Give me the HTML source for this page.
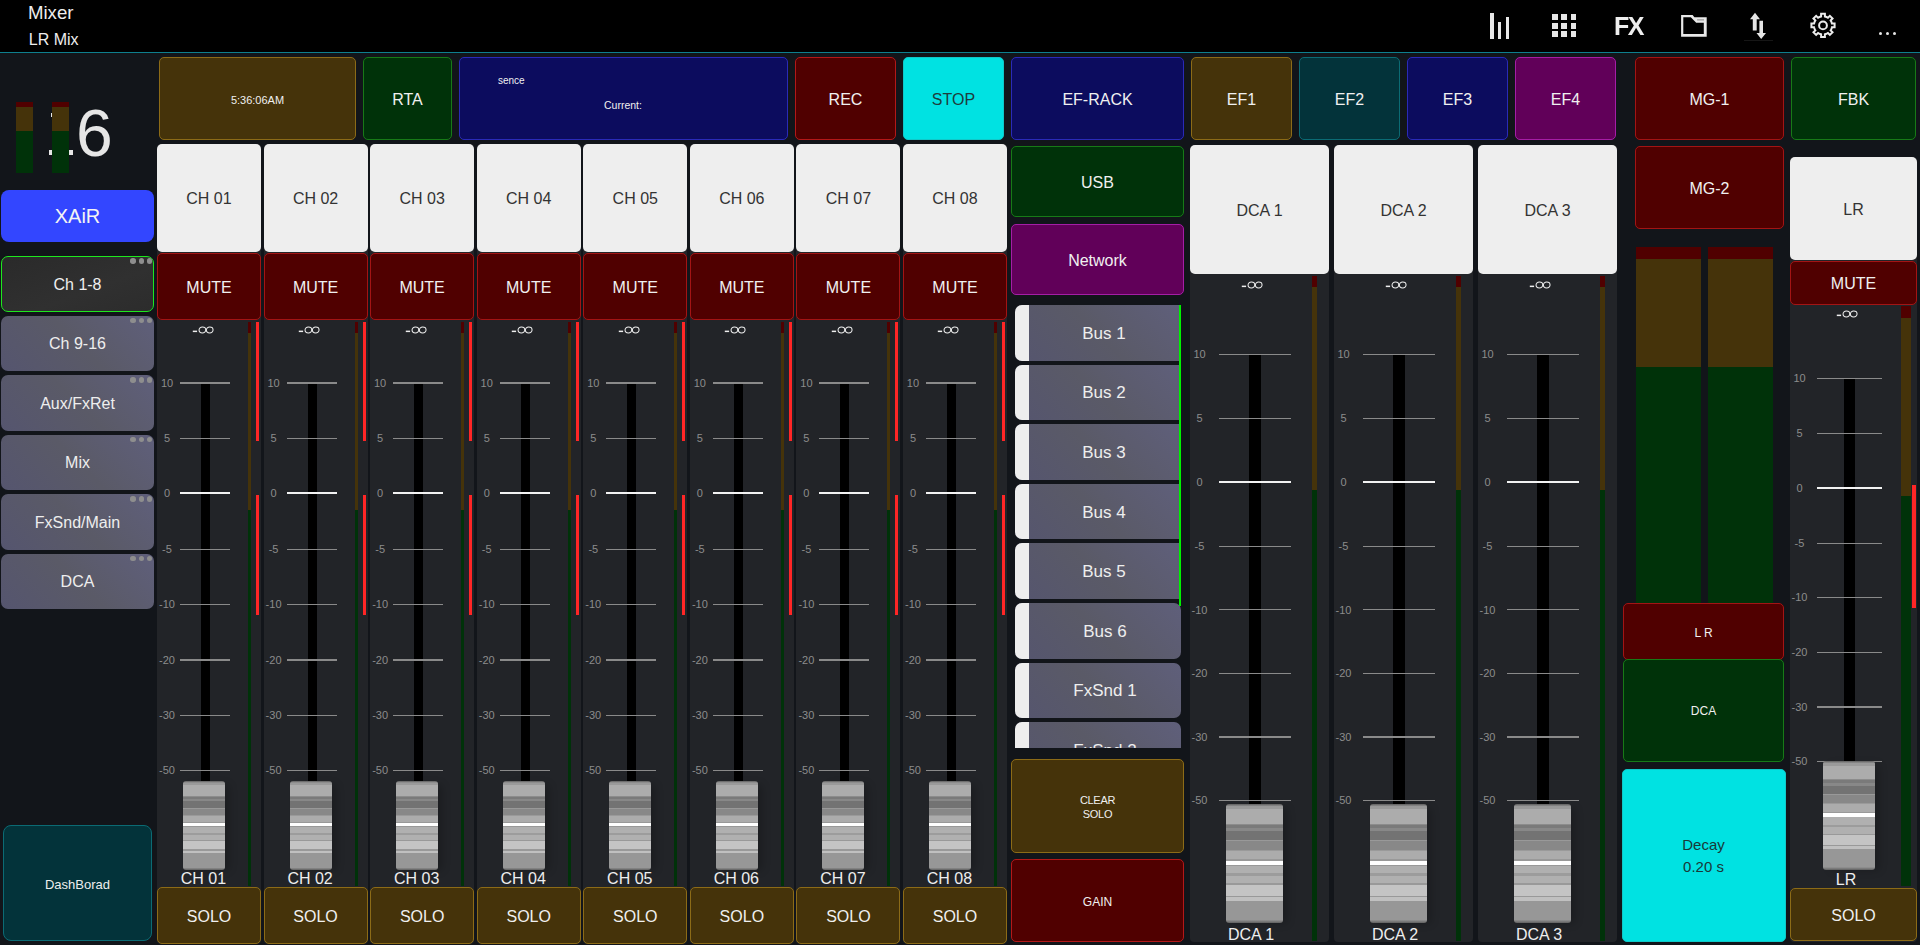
<!DOCTYPE html><html><head><meta charset="utf-8"><title>Mixer</title><style>
*{margin:0;padding:0;box-sizing:border-box}
html,body{width:1920px;height:945px;overflow:hidden;background:#12151a;font-family:"Liberation Sans",sans-serif}
div{position:absolute}
.c{display:flex;align-items:center;justify-content:center;text-align:center;padding-top:2px}
.btn{border-radius:5px;border:1px solid;color:#f0f0f0;font-size:16px}
.wb{background:#eeeeee;border-radius:5px;color:#333;font-size:16px}
.strip{background:#222428;border-radius:4px}
.lbl{color:#8c8c8c;font-size:11px;text-align:center;width:30px;line-height:11px}
.ln{background:#8a8a8a;height:1px}
.inf{color:#eee;font-size:16px;text-align:center;line-height:10px}
.knob{border-radius:3px;box-shadow:6px 2px 8px -2px rgba(0,0,0,0.22);background:linear-gradient(to bottom,#5e5e5e 0%,#9a9a9a 2.15%,#9a9a9a 2.15%,#9a9a9a 4.5%,#acacac 4.5%,#acacac 16.5%,#8c8c8c 16.5%,#8c8c8c 17.7%,#7a7a7a 17.7%,#7a7a7a 20.1%,#888888 20.1%,#888888 22.5%,#737373 22.5%,#737373 30.3%,#999999 30.3%,#999999 31.5%,#888888 31.5%,#888888 38.6%,#9a9a9a 38.6%,#9a9a9a 39.8%,#acacac 39.8%,#acacac 46.4%,#999999 46.4%,#999999 47.6%,#ffffff 47.6%,#ffffff 51%,#999999 51%,#999999 51.8%,#b0b0b0 51.8%,#b0b0b0 58.4%,#9c9c9c 58.4%,#9c9c9c 60.2%,#b0b0b0 60.2%,#b0b0b0 66.7%,#999999 66.7%,#999999 67.9%,#c4c4c4 67.9%,#c4c4c4 76.9%,#999999 76.9%,#999999 78.1%,#c0c0c0 78.1%,#c0c0c0 81.1%,#979797 81.1%,#979797 97.2%,#979797 97.2%,#606060 100%)}
.nm{color:#eee;font-size:16px;text-align:center;line-height:14px}
.tab{border-radius:7px;background:linear-gradient(45deg,#55556f 0%,#5a5a67 50%,#5f5f7b 100%);color:#eee;font-size:16px}
.dots{width:22px;height:6px}
.dots i{position:absolute;top:0;width:5.5px;height:5.5px;border-radius:50%;background:#8e8e8e}
.bus{background:linear-gradient(45deg,#55556f 0%,#5a5a67 50%,#5f5f7b 100%);color:#eee;font-size:17px;border-radius:7px}
</style></head><body>
<div class="" style="left:0px;top:0px;width:1920px;height:52px;background:#000"></div>
<div class="" style="left:0px;top:52px;width:1920px;height:1px;background:#0e7f8e"></div>
<div style="left:28px;top:1.5px;color:#eee;font-size:18.6px;line-height:22px">Mixer</div>
<div style="left:28.8px;top:29.5px;color:#eee;font-size:16px;line-height:20px">LR Mix</div>
<div class="" style="left:1490px;top:13px;width:3.5px;height:26px;background:#e8e8e8"></div>
<div class="" style="left:1497.5px;top:22px;width:3.4px;height:17px;background:#e8e8e8"></div>
<div class="" style="left:1505.9px;top:17px;width:3.3px;height:22px;background:#e8e8e8"></div>
<div class="" style="left:1552px;top:14px;width:6px;height:6px;background:#e6e6e6"></div>
<div class="" style="left:1561px;top:14px;width:6px;height:6px;background:#e6e6e6"></div>
<div class="" style="left:1570.7px;top:14px;width:5.5px;height:6px;background:#e6e6e6"></div>
<div class="" style="left:1552px;top:22.8px;width:6px;height:6px;background:#e6e6e6"></div>
<div class="" style="left:1561px;top:22.8px;width:6px;height:6px;background:#e6e6e6"></div>
<div class="" style="left:1570.7px;top:22.8px;width:5.5px;height:6px;background:#e6e6e6"></div>
<div class="" style="left:1552px;top:31px;width:6px;height:6px;background:#e6e6e6"></div>
<div class="" style="left:1561px;top:31px;width:6px;height:6px;background:#e6e6e6"></div>
<div class="" style="left:1570.7px;top:31px;width:5.5px;height:6px;background:#e6e6e6"></div>
<div style="left:1614px;top:11px;color:#eee;font-size:25px;font-weight:bold;line-height:30px;letter-spacing:-1.5px;transform:translateZ(0)">FX</div>
<svg style="position:absolute;left:1670px;top:5px" width="50" height="40" viewBox="1670 5 50 40">
<path fill-rule="evenodd" d="M1681.1 15 H1692.6 L1694.4 17.2 H1706.7 V36.8 H1681.1 Z M1683.3 17.3 H1690.8 L1696.2 22.7 H1703.8 V34 H1683.3 Z" fill="#e8e8e8"/>
<rect x="1697.1" y="19.1" width="6.9" height="1.5" fill="#a8a8a8"/>
</svg>
<div class="" style="left:1744px;top:40px;width:29px;height:1px;background:#161616"></div>
<svg style="position:absolute;left:1740px;top:5px" width="40" height="40" viewBox="1740 5 40 40">
<path d="M1755 12.7 L1760 19.3 H1756.7 V30.4 H1752.8 V19.3 H1750 Z" fill="#e6e6e6"/>
<path d="M1761.2 39 L1766 33 H1763 V20.8 H1759.4 V33 H1756.5 Z" fill="#e6e6e6"/>
</svg>
<svg style="position:absolute;left:1800px;top:0px" width="50" height="50" viewBox="1800 0 50 50">
<path d="M1821.10 16.50 L1821.10 13.80 L1824.90 13.80 L1824.90 16.50 L1825.70 16.71 L1826.48 16.99 L1827.23 17.34 L1827.95 17.76 L1829.86 15.85 L1832.55 18.54 L1830.64 20.45 L1831.06 21.17 L1831.41 21.92 L1831.69 22.70 L1831.90 23.50 L1834.60 23.50 L1834.60 27.30 L1831.90 27.30 L1831.69 28.10 L1831.41 28.88 L1831.06 29.63 L1830.64 30.35 L1832.55 32.26 L1829.86 34.95 L1827.95 33.04 L1827.23 33.46 L1826.48 33.81 L1825.70 34.09 L1824.90 34.30 L1824.90 37.00 L1821.10 37.00 L1821.10 34.30 L1820.30 34.09 L1819.52 33.81 L1818.77 33.46 L1818.05 33.04 L1816.14 34.95 L1813.45 32.26 L1815.36 30.35 L1814.94 29.63 L1814.59 28.88 L1814.31 28.10 L1814.10 27.30 L1811.40 27.30 L1811.40 23.50 L1814.10 23.50 L1814.31 22.70 L1814.59 21.92 L1814.94 21.17 L1815.36 20.45 L1813.45 18.54 L1816.14 15.85 L1818.05 17.76 L1818.77 17.34 L1819.52 16.99 L1820.30 16.71 Z" fill="none" stroke="#ececec" stroke-width="2" stroke-linejoin="miter"/>
<circle cx="1823" cy="25.4" r="3.9" fill="none" stroke="#ececec" stroke-width="2"/>
</svg>
<div class="" style="left:1878.9px;top:31.9px;width:3.2px;height:3.2px;background:#e6e6e6;border-radius:50%"></div>
<div class="" style="left:1885.9px;top:31.9px;width:3.2px;height:3.2px;background:#e6e6e6;border-radius:50%"></div>
<div class="" style="left:1892.9px;top:31.9px;width:3.2px;height:3.2px;background:#e6e6e6;border-radius:50%"></div>
<div style="left:76px;top:93px;color:#e6e6e6;font-size:66px;line-height:80px">6</div>
<div class="" style="left:49px;top:150px;width:24px;height:5px;background:#e6e6e6"></div>
<div class="" style="left:50.5px;top:112.5px;width:3px;height:4.5px;background:#e6e6e6"></div>
<div class="" style="left:16px;top:102px;width:17px;height:5px;background:#500000"></div>
<div class="" style="left:16px;top:107px;width:17px;height:24px;background:#45330a"></div>
<div class="" style="left:16px;top:131px;width:17px;height:42px;background:#003209"></div>
<div class="" style="left:52px;top:102px;width:17px;height:5px;background:#500000"></div>
<div class="" style="left:52px;top:107px;width:17px;height:24px;background:#45330a"></div>
<div class="" style="left:52px;top:131px;width:17px;height:42px;background:#003209"></div>
<div class="c" style="left:1px;top:189.5px;width:153px;height:52px;background:#3346ff;border-radius:8px;color:#f4f4f4;font-size:20px">XAiR</div>
<div class="c" style="left:1px;top:256px;width:153px;height:55.5px;background:linear-gradient(160deg,#2a2a2a,#303030 60%,#2c2c2c);border:1.5px solid #1ee81e;border-radius:7px;color:#f0f0f0;font-size:16px">Ch 1-8</div>
<div class="dots" style="left:130.4px;top:258px"><i style="left:0"></i><i style="left:8.4px"></i><i style="left:16.6px"></i></div>
<div class="c tab" style="left:1px;top:315.5px;width:153px;height:55.5px;">Ch 9-16</div>
<div class="dots" style="left:130.4px;top:317.5px"><i style="left:0"></i><i style="left:8.4px"></i><i style="left:16.6px"></i></div>
<div class="c tab" style="left:1px;top:375px;width:153px;height:55.5px;">Aux/FxRet</div>
<div class="dots" style="left:130.4px;top:377px"><i style="left:0"></i><i style="left:8.4px"></i><i style="left:16.6px"></i></div>
<div class="c tab" style="left:1px;top:434.5px;width:153px;height:55.5px;">Mix</div>
<div class="dots" style="left:130.4px;top:436.5px"><i style="left:0"></i><i style="left:8.4px"></i><i style="left:16.6px"></i></div>
<div class="c tab" style="left:1px;top:494px;width:153px;height:55.5px;">FxSnd/Main</div>
<div class="dots" style="left:130.4px;top:496px"><i style="left:0"></i><i style="left:8.4px"></i><i style="left:16.6px"></i></div>
<div class="c tab" style="left:1px;top:553.5px;width:153px;height:55.5px;">DCA</div>
<div class="dots" style="left:130.4px;top:555.5px"><i style="left:0"></i><i style="left:8.4px"></i><i style="left:16.6px"></i></div>
<div class="c" style="left:3px;top:825px;width:149px;height:116px;background:#03333a;border:1px solid #0b6b74;border-radius:8px;color:#eee;font-size:13px">DashBorad</div>
<div class="c btn" style="left:159px;top:57px;width:197px;height:83px;background:#45330a;border-color:#8c6b17;font-size:11px;color:#f0f0f0">5:36:06AM</div>
<div class="c btn" style="left:363px;top:57px;width:89px;height:83px;background:#003209;border-color:#177a17;font-size:16px;color:#f0f0f0">RTA</div>
<div class="btn" style="left:459px;top:57px;width:329px;height:83px;background:#0c0c5e;border-color:#2a2ab8"><div style="left:38px;top:17px;font-size:10px;line-height:12px">sence</div><div style="left:144px;top:40.5px;font-size:10.5px;line-height:12px">Current:</div></div>
<div class="c btn" style="left:795px;top:57px;width:101px;height:83px;background:#500000;border-color:#b31818;font-size:16px;color:#f0f0f0">REC</div>
<div class="c btn" style="left:903px;top:57px;width:101px;height:83px;background:#00e2e2;border-color:#10c8c8;font-size:16px;color:#1e3c3c">STOP</div>
<div class="c btn" style="left:1011px;top:57px;width:173px;height:83px;background:#0c0c5e;border-color:#2a2ab8;font-size:16px;color:#f0f0f0">EF-RACK</div>
<div class="c btn" style="left:1191px;top:57px;width:101px;height:83px;background:#45330a;border-color:#8c6b17;font-size:16px;color:#f0f0f0">EF1</div>
<div class="c btn" style="left:1299px;top:57px;width:101px;height:83px;background:#03333a;border-color:#0b6b74;font-size:16px;color:#f0f0f0">EF2</div>
<div class="c btn" style="left:1407px;top:57px;width:101px;height:83px;background:#0c0c5e;border-color:#2a2ab8;font-size:16px;color:#f0f0f0">EF3</div>
<div class="c btn" style="left:1515px;top:57px;width:101px;height:83px;background:#610059;border-color:#a51ea5;font-size:16px;color:#f0f0f0">EF4</div>
<div class="c btn" style="left:1635px;top:57px;width:149px;height:83px;background:#500000;border-color:#a31414;font-size:16px;color:#f0f0f0">MG-1</div>
<div class="c btn" style="left:1791px;top:57px;width:125px;height:83px;background:#003209;border-color:#177a17;font-size:16px;color:#f0f0f0">FBK</div>
<div class="c btn" style="left:1011px;top:146px;width:173px;height:71px;background:#003209;border-color:#177a17;font-size:16px;color:#f0f0f0">USB</div>
<div class="c btn" style="left:1011px;top:224px;width:173px;height:71px;background:#610059;border-color:#a51ea5;font-size:16px;color:#f0f0f0">Network</div>
<div class="c btn" style="left:1635px;top:146px;width:149px;height:83px;background:#500000;border-color:#a31414;font-size:16px;color:#f0f0f0">MG-2</div>
<div class="strip" style="left:157px;top:144px;width:104px;height:800px;"></div>
<div class="c wb" style="left:157px;top:144px;width:104px;height:108px;">CH 01</div>
<div class="c btn" style="left:157px;top:253px;width:104px;height:67px;background:#500000;border-color:#a31414;font-size:16px;color:#f0f0f0">MUTE</div>
<svg style="position:absolute;left:191.5px;top:326px" width="24" height="9" viewBox="0 0 24 9"><rect x="0.8" y="4.6" width="4.3" height="1.5" fill="#eeeeee"/><ellipse cx="10.4" cy="4.0" rx="3.35" ry="2.95" fill="none" stroke="#eeeeee" stroke-width="1.05"/><ellipse cx="17.7" cy="4.0" rx="3.35" ry="2.95" fill="none" stroke="#eeeeee" stroke-width="1.05"/></svg>
<div class="" style="left:248px;top:322px;width:3px;height:11px;background:#500000"></div>
<div class="" style="left:248px;top:333px;width:3px;height:177px;background:#45330a"></div>
<div class="" style="left:248px;top:510px;width:3px;height:376px;background:#003209"></div>
<div class="" style="left:256px;top:322px;width:3px;height:119px;background:#ff2626"></div>
<div class="" style="left:256px;top:495px;width:3px;height:120px;background:#ff2626"></div>
<div class="" style="left:201px;top:384px;width:9px;height:397px;background:#000"></div>
<div class="" style="left:180px;top:382px;width:50px;height:2px;background:#8a8a8a"></div>
<div class="lbl" style="left:152px;top:378px">10</div>
<div class="" style="left:180px;top:437.5px;width:50px;height:1px;background:#8a8a8a"></div>
<div class="lbl" style="left:152px;top:433px">5</div>
<div class="" style="left:180px;top:492.325px;width:50px;height:1.35px;background:#f2f2f2"></div>
<div class="lbl" style="left:152px;top:488px">0</div>
<div class="" style="left:180px;top:548.5px;width:50px;height:1px;background:#8a8a8a"></div>
<div class="lbl" style="left:152px;top:544px">-5</div>
<div class="" style="left:180px;top:603.5px;width:50px;height:1px;background:#8a8a8a"></div>
<div class="lbl" style="left:152px;top:599px">-10</div>
<div class="" style="left:180px;top:659px;width:50px;height:2px;background:#8a8a8a"></div>
<div class="lbl" style="left:152px;top:655px">-20</div>
<div class="" style="left:180px;top:714.5px;width:50px;height:1px;background:#8a8a8a"></div>
<div class="lbl" style="left:152px;top:710px">-30</div>
<div class="" style="left:180px;top:769.5px;width:50px;height:1px;background:#8a8a8a"></div>
<div class="lbl" style="left:152px;top:765px">-50</div>
<div class="knob" style="left:183px;top:781px;width:42px;height:89px;"></div>
<div class="nm" style="left:157px;top:872px;width:93px">CH 01</div>
<div class="c btn" style="left:157px;top:887px;width:104px;height:57px;background:#45330a;border-color:#8c6b17;font-size:16px;color:#f0f0f0">SOLO</div>
<div class="strip" style="left:263.57px;top:144px;width:104px;height:800px;"></div>
<div class="c wb" style="left:263.57px;top:144px;width:104px;height:108px;">CH 02</div>
<div class="c btn" style="left:263.57px;top:253px;width:104px;height:67px;background:#500000;border-color:#a31414;font-size:16px;color:#f0f0f0">MUTE</div>
<svg style="position:absolute;left:298.07px;top:326px" width="24" height="9" viewBox="0 0 24 9"><rect x="0.8" y="4.6" width="4.3" height="1.5" fill="#eeeeee"/><ellipse cx="10.4" cy="4.0" rx="3.35" ry="2.95" fill="none" stroke="#eeeeee" stroke-width="1.05"/><ellipse cx="17.7" cy="4.0" rx="3.35" ry="2.95" fill="none" stroke="#eeeeee" stroke-width="1.05"/></svg>
<div class="" style="left:354.57px;top:322px;width:3px;height:11px;background:#500000"></div>
<div class="" style="left:354.57px;top:333px;width:3px;height:177px;background:#45330a"></div>
<div class="" style="left:354.57px;top:510px;width:3px;height:376px;background:#003209"></div>
<div class="" style="left:362.57px;top:322px;width:3px;height:119px;background:#ff2626"></div>
<div class="" style="left:362.57px;top:495px;width:3px;height:120px;background:#ff2626"></div>
<div class="" style="left:307.57px;top:384px;width:9px;height:397px;background:#000"></div>
<div class="" style="left:286.57px;top:382px;width:50px;height:2px;background:#8a8a8a"></div>
<div class="lbl" style="left:258.57px;top:378px">10</div>
<div class="" style="left:286.57px;top:437.5px;width:50px;height:1px;background:#8a8a8a"></div>
<div class="lbl" style="left:258.57px;top:433px">5</div>
<div class="" style="left:286.57px;top:492.325px;width:50px;height:1.35px;background:#f2f2f2"></div>
<div class="lbl" style="left:258.57px;top:488px">0</div>
<div class="" style="left:286.57px;top:548.5px;width:50px;height:1px;background:#8a8a8a"></div>
<div class="lbl" style="left:258.57px;top:544px">-5</div>
<div class="" style="left:286.57px;top:603.5px;width:50px;height:1px;background:#8a8a8a"></div>
<div class="lbl" style="left:258.57px;top:599px">-10</div>
<div class="" style="left:286.57px;top:659px;width:50px;height:2px;background:#8a8a8a"></div>
<div class="lbl" style="left:258.57px;top:655px">-20</div>
<div class="" style="left:286.57px;top:714.5px;width:50px;height:1px;background:#8a8a8a"></div>
<div class="lbl" style="left:258.57px;top:710px">-30</div>
<div class="" style="left:286.57px;top:769.5px;width:50px;height:1px;background:#8a8a8a"></div>
<div class="lbl" style="left:258.57px;top:765px">-50</div>
<div class="knob" style="left:289.57px;top:781px;width:42px;height:89px;"></div>
<div class="nm" style="left:263.57px;top:872px;width:93px">CH 02</div>
<div class="c btn" style="left:263.57px;top:887px;width:104px;height:57px;background:#45330a;border-color:#8c6b17;font-size:16px;color:#f0f0f0">SOLO</div>
<div class="strip" style="left:370.14px;top:144px;width:104px;height:800px;"></div>
<div class="c wb" style="left:370.14px;top:144px;width:104px;height:108px;">CH 03</div>
<div class="c btn" style="left:370.14px;top:253px;width:104px;height:67px;background:#500000;border-color:#a31414;font-size:16px;color:#f0f0f0">MUTE</div>
<svg style="position:absolute;left:404.64px;top:326px" width="24" height="9" viewBox="0 0 24 9"><rect x="0.8" y="4.6" width="4.3" height="1.5" fill="#eeeeee"/><ellipse cx="10.4" cy="4.0" rx="3.35" ry="2.95" fill="none" stroke="#eeeeee" stroke-width="1.05"/><ellipse cx="17.7" cy="4.0" rx="3.35" ry="2.95" fill="none" stroke="#eeeeee" stroke-width="1.05"/></svg>
<div class="" style="left:461.14px;top:322px;width:3px;height:11px;background:#500000"></div>
<div class="" style="left:461.14px;top:333px;width:3px;height:177px;background:#45330a"></div>
<div class="" style="left:461.14px;top:510px;width:3px;height:376px;background:#003209"></div>
<div class="" style="left:469.14px;top:322px;width:3px;height:119px;background:#ff2626"></div>
<div class="" style="left:469.14px;top:495px;width:3px;height:120px;background:#ff2626"></div>
<div class="" style="left:414.14px;top:384px;width:9px;height:397px;background:#000"></div>
<div class="" style="left:393.14px;top:382px;width:50px;height:2px;background:#8a8a8a"></div>
<div class="lbl" style="left:365.14px;top:378px">10</div>
<div class="" style="left:393.14px;top:437.5px;width:50px;height:1px;background:#8a8a8a"></div>
<div class="lbl" style="left:365.14px;top:433px">5</div>
<div class="" style="left:393.14px;top:492.325px;width:50px;height:1.35px;background:#f2f2f2"></div>
<div class="lbl" style="left:365.14px;top:488px">0</div>
<div class="" style="left:393.14px;top:548.5px;width:50px;height:1px;background:#8a8a8a"></div>
<div class="lbl" style="left:365.14px;top:544px">-5</div>
<div class="" style="left:393.14px;top:603.5px;width:50px;height:1px;background:#8a8a8a"></div>
<div class="lbl" style="left:365.14px;top:599px">-10</div>
<div class="" style="left:393.14px;top:659px;width:50px;height:2px;background:#8a8a8a"></div>
<div class="lbl" style="left:365.14px;top:655px">-20</div>
<div class="" style="left:393.14px;top:714.5px;width:50px;height:1px;background:#8a8a8a"></div>
<div class="lbl" style="left:365.14px;top:710px">-30</div>
<div class="" style="left:393.14px;top:769.5px;width:50px;height:1px;background:#8a8a8a"></div>
<div class="lbl" style="left:365.14px;top:765px">-50</div>
<div class="knob" style="left:396.14px;top:781px;width:42px;height:89px;"></div>
<div class="nm" style="left:370.14px;top:872px;width:93px">CH 03</div>
<div class="c btn" style="left:370.14px;top:887px;width:104px;height:57px;background:#45330a;border-color:#8c6b17;font-size:16px;color:#f0f0f0">SOLO</div>
<div class="strip" style="left:476.71px;top:144px;width:104px;height:800px;"></div>
<div class="c wb" style="left:476.71px;top:144px;width:104px;height:108px;">CH 04</div>
<div class="c btn" style="left:476.71px;top:253px;width:104px;height:67px;background:#500000;border-color:#a31414;font-size:16px;color:#f0f0f0">MUTE</div>
<svg style="position:absolute;left:511.21px;top:326px" width="24" height="9" viewBox="0 0 24 9"><rect x="0.8" y="4.6" width="4.3" height="1.5" fill="#eeeeee"/><ellipse cx="10.4" cy="4.0" rx="3.35" ry="2.95" fill="none" stroke="#eeeeee" stroke-width="1.05"/><ellipse cx="17.7" cy="4.0" rx="3.35" ry="2.95" fill="none" stroke="#eeeeee" stroke-width="1.05"/></svg>
<div class="" style="left:567.71px;top:322px;width:3px;height:11px;background:#500000"></div>
<div class="" style="left:567.71px;top:333px;width:3px;height:177px;background:#45330a"></div>
<div class="" style="left:567.71px;top:510px;width:3px;height:376px;background:#003209"></div>
<div class="" style="left:575.71px;top:322px;width:3px;height:119px;background:#ff2626"></div>
<div class="" style="left:575.71px;top:495px;width:3px;height:120px;background:#ff2626"></div>
<div class="" style="left:520.71px;top:384px;width:9px;height:397px;background:#000"></div>
<div class="" style="left:499.71px;top:382px;width:50px;height:2px;background:#8a8a8a"></div>
<div class="lbl" style="left:471.71px;top:378px">10</div>
<div class="" style="left:499.71px;top:437.5px;width:50px;height:1px;background:#8a8a8a"></div>
<div class="lbl" style="left:471.71px;top:433px">5</div>
<div class="" style="left:499.71px;top:492.325px;width:50px;height:1.35px;background:#f2f2f2"></div>
<div class="lbl" style="left:471.71px;top:488px">0</div>
<div class="" style="left:499.71px;top:548.5px;width:50px;height:1px;background:#8a8a8a"></div>
<div class="lbl" style="left:471.71px;top:544px">-5</div>
<div class="" style="left:499.71px;top:603.5px;width:50px;height:1px;background:#8a8a8a"></div>
<div class="lbl" style="left:471.71px;top:599px">-10</div>
<div class="" style="left:499.71px;top:659px;width:50px;height:2px;background:#8a8a8a"></div>
<div class="lbl" style="left:471.71px;top:655px">-20</div>
<div class="" style="left:499.71px;top:714.5px;width:50px;height:1px;background:#8a8a8a"></div>
<div class="lbl" style="left:471.71px;top:710px">-30</div>
<div class="" style="left:499.71px;top:769.5px;width:50px;height:1px;background:#8a8a8a"></div>
<div class="lbl" style="left:471.71px;top:765px">-50</div>
<div class="knob" style="left:502.71px;top:781px;width:42px;height:89px;"></div>
<div class="nm" style="left:476.71px;top:872px;width:93px">CH 04</div>
<div class="c btn" style="left:476.71px;top:887px;width:104px;height:57px;background:#45330a;border-color:#8c6b17;font-size:16px;color:#f0f0f0">SOLO</div>
<div class="strip" style="left:583.28px;top:144px;width:104px;height:800px;"></div>
<div class="c wb" style="left:583.28px;top:144px;width:104px;height:108px;">CH 05</div>
<div class="c btn" style="left:583.28px;top:253px;width:104px;height:67px;background:#500000;border-color:#a31414;font-size:16px;color:#f0f0f0">MUTE</div>
<svg style="position:absolute;left:617.78px;top:326px" width="24" height="9" viewBox="0 0 24 9"><rect x="0.8" y="4.6" width="4.3" height="1.5" fill="#eeeeee"/><ellipse cx="10.4" cy="4.0" rx="3.35" ry="2.95" fill="none" stroke="#eeeeee" stroke-width="1.05"/><ellipse cx="17.7" cy="4.0" rx="3.35" ry="2.95" fill="none" stroke="#eeeeee" stroke-width="1.05"/></svg>
<div class="" style="left:674.28px;top:322px;width:3px;height:11px;background:#500000"></div>
<div class="" style="left:674.28px;top:333px;width:3px;height:177px;background:#45330a"></div>
<div class="" style="left:674.28px;top:510px;width:3px;height:376px;background:#003209"></div>
<div class="" style="left:682.28px;top:322px;width:3px;height:119px;background:#ff2626"></div>
<div class="" style="left:682.28px;top:495px;width:3px;height:120px;background:#ff2626"></div>
<div class="" style="left:627.28px;top:384px;width:9px;height:397px;background:#000"></div>
<div class="" style="left:606.28px;top:382px;width:50px;height:2px;background:#8a8a8a"></div>
<div class="lbl" style="left:578.28px;top:378px">10</div>
<div class="" style="left:606.28px;top:437.5px;width:50px;height:1px;background:#8a8a8a"></div>
<div class="lbl" style="left:578.28px;top:433px">5</div>
<div class="" style="left:606.28px;top:492.325px;width:50px;height:1.35px;background:#f2f2f2"></div>
<div class="lbl" style="left:578.28px;top:488px">0</div>
<div class="" style="left:606.28px;top:548.5px;width:50px;height:1px;background:#8a8a8a"></div>
<div class="lbl" style="left:578.28px;top:544px">-5</div>
<div class="" style="left:606.28px;top:603.5px;width:50px;height:1px;background:#8a8a8a"></div>
<div class="lbl" style="left:578.28px;top:599px">-10</div>
<div class="" style="left:606.28px;top:659px;width:50px;height:2px;background:#8a8a8a"></div>
<div class="lbl" style="left:578.28px;top:655px">-20</div>
<div class="" style="left:606.28px;top:714.5px;width:50px;height:1px;background:#8a8a8a"></div>
<div class="lbl" style="left:578.28px;top:710px">-30</div>
<div class="" style="left:606.28px;top:769.5px;width:50px;height:1px;background:#8a8a8a"></div>
<div class="lbl" style="left:578.28px;top:765px">-50</div>
<div class="knob" style="left:609.28px;top:781px;width:42px;height:89px;"></div>
<div class="nm" style="left:583.28px;top:872px;width:93px">CH 05</div>
<div class="c btn" style="left:583.28px;top:887px;width:104px;height:57px;background:#45330a;border-color:#8c6b17;font-size:16px;color:#f0f0f0">SOLO</div>
<div class="strip" style="left:689.85px;top:144px;width:104px;height:800px;"></div>
<div class="c wb" style="left:689.85px;top:144px;width:104px;height:108px;">CH 06</div>
<div class="c btn" style="left:689.85px;top:253px;width:104px;height:67px;background:#500000;border-color:#a31414;font-size:16px;color:#f0f0f0">MUTE</div>
<svg style="position:absolute;left:724.35px;top:326px" width="24" height="9" viewBox="0 0 24 9"><rect x="0.8" y="4.6" width="4.3" height="1.5" fill="#eeeeee"/><ellipse cx="10.4" cy="4.0" rx="3.35" ry="2.95" fill="none" stroke="#eeeeee" stroke-width="1.05"/><ellipse cx="17.7" cy="4.0" rx="3.35" ry="2.95" fill="none" stroke="#eeeeee" stroke-width="1.05"/></svg>
<div class="" style="left:780.85px;top:322px;width:3px;height:11px;background:#500000"></div>
<div class="" style="left:780.85px;top:333px;width:3px;height:177px;background:#45330a"></div>
<div class="" style="left:780.85px;top:510px;width:3px;height:376px;background:#003209"></div>
<div class="" style="left:788.85px;top:322px;width:3px;height:119px;background:#ff2626"></div>
<div class="" style="left:788.85px;top:495px;width:3px;height:120px;background:#ff2626"></div>
<div class="" style="left:733.85px;top:384px;width:9px;height:397px;background:#000"></div>
<div class="" style="left:712.85px;top:382px;width:50px;height:2px;background:#8a8a8a"></div>
<div class="lbl" style="left:684.85px;top:378px">10</div>
<div class="" style="left:712.85px;top:437.5px;width:50px;height:1px;background:#8a8a8a"></div>
<div class="lbl" style="left:684.85px;top:433px">5</div>
<div class="" style="left:712.85px;top:492.325px;width:50px;height:1.35px;background:#f2f2f2"></div>
<div class="lbl" style="left:684.85px;top:488px">0</div>
<div class="" style="left:712.85px;top:548.5px;width:50px;height:1px;background:#8a8a8a"></div>
<div class="lbl" style="left:684.85px;top:544px">-5</div>
<div class="" style="left:712.85px;top:603.5px;width:50px;height:1px;background:#8a8a8a"></div>
<div class="lbl" style="left:684.85px;top:599px">-10</div>
<div class="" style="left:712.85px;top:659px;width:50px;height:2px;background:#8a8a8a"></div>
<div class="lbl" style="left:684.85px;top:655px">-20</div>
<div class="" style="left:712.85px;top:714.5px;width:50px;height:1px;background:#8a8a8a"></div>
<div class="lbl" style="left:684.85px;top:710px">-30</div>
<div class="" style="left:712.85px;top:769.5px;width:50px;height:1px;background:#8a8a8a"></div>
<div class="lbl" style="left:684.85px;top:765px">-50</div>
<div class="knob" style="left:715.85px;top:781px;width:42px;height:89px;"></div>
<div class="nm" style="left:689.85px;top:872px;width:93px">CH 06</div>
<div class="c btn" style="left:689.85px;top:887px;width:104px;height:57px;background:#45330a;border-color:#8c6b17;font-size:16px;color:#f0f0f0">SOLO</div>
<div class="strip" style="left:796.42px;top:144px;width:104px;height:800px;"></div>
<div class="c wb" style="left:796.42px;top:144px;width:104px;height:108px;">CH 07</div>
<div class="c btn" style="left:796.42px;top:253px;width:104px;height:67px;background:#500000;border-color:#a31414;font-size:16px;color:#f0f0f0">MUTE</div>
<svg style="position:absolute;left:830.92px;top:326px" width="24" height="9" viewBox="0 0 24 9"><rect x="0.8" y="4.6" width="4.3" height="1.5" fill="#eeeeee"/><ellipse cx="10.4" cy="4.0" rx="3.35" ry="2.95" fill="none" stroke="#eeeeee" stroke-width="1.05"/><ellipse cx="17.7" cy="4.0" rx="3.35" ry="2.95" fill="none" stroke="#eeeeee" stroke-width="1.05"/></svg>
<div class="" style="left:887.42px;top:322px;width:3px;height:11px;background:#500000"></div>
<div class="" style="left:887.42px;top:333px;width:3px;height:177px;background:#45330a"></div>
<div class="" style="left:887.42px;top:510px;width:3px;height:376px;background:#003209"></div>
<div class="" style="left:895.42px;top:322px;width:3px;height:119px;background:#ff2626"></div>
<div class="" style="left:895.42px;top:495px;width:3px;height:120px;background:#ff2626"></div>
<div class="" style="left:840.42px;top:384px;width:9px;height:397px;background:#000"></div>
<div class="" style="left:819.42px;top:382px;width:50px;height:2px;background:#8a8a8a"></div>
<div class="lbl" style="left:791.42px;top:378px">10</div>
<div class="" style="left:819.42px;top:437.5px;width:50px;height:1px;background:#8a8a8a"></div>
<div class="lbl" style="left:791.42px;top:433px">5</div>
<div class="" style="left:819.42px;top:492.325px;width:50px;height:1.35px;background:#f2f2f2"></div>
<div class="lbl" style="left:791.42px;top:488px">0</div>
<div class="" style="left:819.42px;top:548.5px;width:50px;height:1px;background:#8a8a8a"></div>
<div class="lbl" style="left:791.42px;top:544px">-5</div>
<div class="" style="left:819.42px;top:603.5px;width:50px;height:1px;background:#8a8a8a"></div>
<div class="lbl" style="left:791.42px;top:599px">-10</div>
<div class="" style="left:819.42px;top:659px;width:50px;height:2px;background:#8a8a8a"></div>
<div class="lbl" style="left:791.42px;top:655px">-20</div>
<div class="" style="left:819.42px;top:714.5px;width:50px;height:1px;background:#8a8a8a"></div>
<div class="lbl" style="left:791.42px;top:710px">-30</div>
<div class="" style="left:819.42px;top:769.5px;width:50px;height:1px;background:#8a8a8a"></div>
<div class="lbl" style="left:791.42px;top:765px">-50</div>
<div class="knob" style="left:822.42px;top:781px;width:42px;height:89px;"></div>
<div class="nm" style="left:796.42px;top:872px;width:93px">CH 07</div>
<div class="c btn" style="left:796.42px;top:887px;width:104px;height:57px;background:#45330a;border-color:#8c6b17;font-size:16px;color:#f0f0f0">SOLO</div>
<div class="strip" style="left:902.99px;top:144px;width:104px;height:800px;"></div>
<div class="c wb" style="left:902.99px;top:144px;width:104px;height:108px;">CH 08</div>
<div class="c btn" style="left:902.99px;top:253px;width:104px;height:67px;background:#500000;border-color:#a31414;font-size:16px;color:#f0f0f0">MUTE</div>
<svg style="position:absolute;left:937.49px;top:326px" width="24" height="9" viewBox="0 0 24 9"><rect x="0.8" y="4.6" width="4.3" height="1.5" fill="#eeeeee"/><ellipse cx="10.4" cy="4.0" rx="3.35" ry="2.95" fill="none" stroke="#eeeeee" stroke-width="1.05"/><ellipse cx="17.7" cy="4.0" rx="3.35" ry="2.95" fill="none" stroke="#eeeeee" stroke-width="1.05"/></svg>
<div class="" style="left:993.99px;top:322px;width:3px;height:11px;background:#500000"></div>
<div class="" style="left:993.99px;top:333px;width:3px;height:177px;background:#45330a"></div>
<div class="" style="left:993.99px;top:510px;width:3px;height:376px;background:#003209"></div>
<div class="" style="left:1001.99px;top:322px;width:3px;height:119px;background:#ff2626"></div>
<div class="" style="left:1001.99px;top:495px;width:3px;height:120px;background:#ff2626"></div>
<div class="" style="left:946.99px;top:384px;width:9px;height:397px;background:#000"></div>
<div class="" style="left:925.99px;top:382px;width:50px;height:2px;background:#8a8a8a"></div>
<div class="lbl" style="left:897.99px;top:378px">10</div>
<div class="" style="left:925.99px;top:437.5px;width:50px;height:1px;background:#8a8a8a"></div>
<div class="lbl" style="left:897.99px;top:433px">5</div>
<div class="" style="left:925.99px;top:492.325px;width:50px;height:1.35px;background:#f2f2f2"></div>
<div class="lbl" style="left:897.99px;top:488px">0</div>
<div class="" style="left:925.99px;top:548.5px;width:50px;height:1px;background:#8a8a8a"></div>
<div class="lbl" style="left:897.99px;top:544px">-5</div>
<div class="" style="left:925.99px;top:603.5px;width:50px;height:1px;background:#8a8a8a"></div>
<div class="lbl" style="left:897.99px;top:599px">-10</div>
<div class="" style="left:925.99px;top:659px;width:50px;height:2px;background:#8a8a8a"></div>
<div class="lbl" style="left:897.99px;top:655px">-20</div>
<div class="" style="left:925.99px;top:714.5px;width:50px;height:1px;background:#8a8a8a"></div>
<div class="lbl" style="left:897.99px;top:710px">-30</div>
<div class="" style="left:925.99px;top:769.5px;width:50px;height:1px;background:#8a8a8a"></div>
<div class="lbl" style="left:897.99px;top:765px">-50</div>
<div class="knob" style="left:928.99px;top:781px;width:42px;height:89px;"></div>
<div class="nm" style="left:902.99px;top:872px;width:93px">CH 08</div>
<div class="c btn" style="left:902.99px;top:887px;width:104px;height:57px;background:#45330a;border-color:#8c6b17;font-size:16px;color:#f0f0f0">SOLO</div>
<div style="left:1011px;top:300px;width:175px;height:448px;overflow:hidden">
<div class="c bus" style="left:4px;top:5px;width:164px;height:55.5px;border-radius:7px 0 0 7px;padding-left:14px">Bus 1</div>
<div style="left:4px;top:5px;width:14px;height:55.5px;background:#eeeeee;border-radius:7px 0 0 7px"></div>
<div class="c bus" style="left:4px;top:64.6px;width:164px;height:55.5px;border-radius:7px 0 0 7px;padding-left:14px">Bus 2</div>
<div style="left:4px;top:64.6px;width:14px;height:55.5px;background:#eeeeee;border-radius:7px 0 0 7px"></div>
<div class="c bus" style="left:4px;top:124.2px;width:164px;height:55.5px;border-radius:7px 0 0 7px;padding-left:14px">Bus 3</div>
<div style="left:4px;top:124.2px;width:14px;height:55.5px;background:#eeeeee;border-radius:7px 0 0 7px"></div>
<div class="c bus" style="left:4px;top:183.8px;width:164px;height:55.5px;border-radius:7px 0 0 7px;padding-left:14px">Bus 4</div>
<div style="left:4px;top:183.8px;width:14px;height:55.5px;background:#eeeeee;border-radius:7px 0 0 7px"></div>
<div class="c bus" style="left:4px;top:243.4px;width:164px;height:55.5px;border-radius:7px 0 0 7px;padding-left:14px">Bus 5</div>
<div style="left:4px;top:243.4px;width:14px;height:55.5px;background:#eeeeee;border-radius:7px 0 0 7px"></div>
<div class="c bus" style="left:4px;top:303px;width:166px;height:55.5px;border-radius:7px;padding-left:14px">Bus 6</div>
<div style="left:4px;top:303px;width:14px;height:55.5px;background:#eeeeee;border-radius:7px 0 0 7px"></div>
<div class="c bus" style="left:4px;top:362.6px;width:166px;height:55.5px;border-radius:7px;padding-left:14px">FxSnd 1</div>
<div style="left:4px;top:362.6px;width:14px;height:55.5px;background:#eeeeee;border-radius:7px 0 0 7px"></div>
<div class="c bus" style="left:4px;top:422.2px;width:166px;height:55.5px;border-radius:7px;padding-left:14px">FxSnd 2</div>
<div style="left:4px;top:422.2px;width:14px;height:55.5px;background:#eeeeee;border-radius:7px 0 0 7px"></div>
</div>
<div class="" style="left:1179px;top:305px;width:2px;height:301px;background:#00f000"></div>
<div class="c btn" style="left:1011px;top:759px;width:173px;height:94px;background:#45330a;border-color:#8c6b17;font-size:11px;color:#f0f0f0"><span style="line-height:14px;letter-spacing:-0.3px">CLEAR<br>SOLO</span></div>
<div class="c btn" style="left:1011px;top:859px;width:173px;height:83px;background:#500000;border-color:#b31818;font-size:12px;color:#f0f0f0">GAIN</div>
<div class="strip" style="left:1190px;top:145px;width:139px;height:796.5px;"></div>
<div class="c wb" style="left:1190px;top:145px;width:139px;height:129px;">DCA 1</div>
<svg style="position:absolute;left:1240.5px;top:281px" width="24" height="9" viewBox="0 0 24 9"><rect x="0.8" y="4.6" width="4.3" height="1.5" fill="#eeeeee"/><ellipse cx="10.4" cy="4.0" rx="3.35" ry="2.95" fill="none" stroke="#eeeeee" stroke-width="1.05"/><ellipse cx="17.7" cy="4.0" rx="3.35" ry="2.95" fill="none" stroke="#eeeeee" stroke-width="1.05"/></svg>
<div class="" style="left:1312px;top:276px;width:5px;height:11px;background:#500000"></div>
<div class="" style="left:1312px;top:287px;width:5px;height:203px;background:#45330a"></div>
<div class="" style="left:1312px;top:490px;width:5px;height:451px;background:#003209"></div>
<div class="" style="left:1249px;top:355px;width:12px;height:449px;background:#000"></div>
<div class="" style="left:1219px;top:353.5px;width:72px;height:1px;background:#8a8a8a"></div>
<div class="lbl" style="left:1184.5px;top:349px">10</div>
<div class="" style="left:1219px;top:417.5px;width:72px;height:1px;background:#8a8a8a"></div>
<div class="lbl" style="left:1184.5px;top:413px">5</div>
<div class="" style="left:1219px;top:481.35px;width:72px;height:1.3px;background:#f2f2f2"></div>
<div class="lbl" style="left:1184.5px;top:477px">0</div>
<div class="" style="left:1219px;top:545.5px;width:72px;height:1px;background:#8a8a8a"></div>
<div class="lbl" style="left:1184.5px;top:541px">-5</div>
<div class="" style="left:1219px;top:609px;width:72px;height:1px;background:#8a8a8a"></div>
<div class="lbl" style="left:1184.5px;top:604.5px">-10</div>
<div class="" style="left:1219px;top:672.5px;width:72px;height:1px;background:#8a8a8a"></div>
<div class="lbl" style="left:1184.5px;top:668px">-20</div>
<div class="" style="left:1219px;top:736px;width:72px;height:2px;background:#8a8a8a"></div>
<div class="lbl" style="left:1184.5px;top:732px">-30</div>
<div class="" style="left:1219px;top:799.5px;width:72px;height:1px;background:#8a8a8a"></div>
<div class="lbl" style="left:1184.5px;top:795px">-50</div>
<div class="knob" style="left:1226px;top:804px;width:57px;height:119px;"></div>
<div class="nm" style="left:1190px;top:928px;width:122px">DCA 1</div>
<div class="strip" style="left:1334px;top:145px;width:139px;height:796.5px;"></div>
<div class="c wb" style="left:1334px;top:145px;width:139px;height:129px;">DCA 2</div>
<svg style="position:absolute;left:1384.5px;top:281px" width="24" height="9" viewBox="0 0 24 9"><rect x="0.8" y="4.6" width="4.3" height="1.5" fill="#eeeeee"/><ellipse cx="10.4" cy="4.0" rx="3.35" ry="2.95" fill="none" stroke="#eeeeee" stroke-width="1.05"/><ellipse cx="17.7" cy="4.0" rx="3.35" ry="2.95" fill="none" stroke="#eeeeee" stroke-width="1.05"/></svg>
<div class="" style="left:1456px;top:276px;width:5px;height:11px;background:#500000"></div>
<div class="" style="left:1456px;top:287px;width:5px;height:203px;background:#45330a"></div>
<div class="" style="left:1456px;top:490px;width:5px;height:451px;background:#003209"></div>
<div class="" style="left:1393px;top:355px;width:12px;height:449px;background:#000"></div>
<div class="" style="left:1363px;top:353.5px;width:72px;height:1px;background:#8a8a8a"></div>
<div class="lbl" style="left:1328.5px;top:349px">10</div>
<div class="" style="left:1363px;top:417.5px;width:72px;height:1px;background:#8a8a8a"></div>
<div class="lbl" style="left:1328.5px;top:413px">5</div>
<div class="" style="left:1363px;top:481.35px;width:72px;height:1.3px;background:#f2f2f2"></div>
<div class="lbl" style="left:1328.5px;top:477px">0</div>
<div class="" style="left:1363px;top:545.5px;width:72px;height:1px;background:#8a8a8a"></div>
<div class="lbl" style="left:1328.5px;top:541px">-5</div>
<div class="" style="left:1363px;top:609px;width:72px;height:1px;background:#8a8a8a"></div>
<div class="lbl" style="left:1328.5px;top:604.5px">-10</div>
<div class="" style="left:1363px;top:672.5px;width:72px;height:1px;background:#8a8a8a"></div>
<div class="lbl" style="left:1328.5px;top:668px">-20</div>
<div class="" style="left:1363px;top:736px;width:72px;height:2px;background:#8a8a8a"></div>
<div class="lbl" style="left:1328.5px;top:732px">-30</div>
<div class="" style="left:1363px;top:799.5px;width:72px;height:1px;background:#8a8a8a"></div>
<div class="lbl" style="left:1328.5px;top:795px">-50</div>
<div class="knob" style="left:1370px;top:804px;width:57px;height:119px;"></div>
<div class="nm" style="left:1334px;top:928px;width:122px">DCA 2</div>
<div class="strip" style="left:1478px;top:145px;width:139px;height:796.5px;"></div>
<div class="c wb" style="left:1478px;top:145px;width:139px;height:129px;">DCA 3</div>
<svg style="position:absolute;left:1528.5px;top:281px" width="24" height="9" viewBox="0 0 24 9"><rect x="0.8" y="4.6" width="4.3" height="1.5" fill="#eeeeee"/><ellipse cx="10.4" cy="4.0" rx="3.35" ry="2.95" fill="none" stroke="#eeeeee" stroke-width="1.05"/><ellipse cx="17.7" cy="4.0" rx="3.35" ry="2.95" fill="none" stroke="#eeeeee" stroke-width="1.05"/></svg>
<div class="" style="left:1600px;top:276px;width:5px;height:11px;background:#500000"></div>
<div class="" style="left:1600px;top:287px;width:5px;height:203px;background:#45330a"></div>
<div class="" style="left:1600px;top:490px;width:5px;height:451px;background:#003209"></div>
<div class="" style="left:1537px;top:355px;width:12px;height:449px;background:#000"></div>
<div class="" style="left:1507px;top:353.5px;width:72px;height:1px;background:#8a8a8a"></div>
<div class="lbl" style="left:1472.5px;top:349px">10</div>
<div class="" style="left:1507px;top:417.5px;width:72px;height:1px;background:#8a8a8a"></div>
<div class="lbl" style="left:1472.5px;top:413px">5</div>
<div class="" style="left:1507px;top:481.35px;width:72px;height:1.3px;background:#f2f2f2"></div>
<div class="lbl" style="left:1472.5px;top:477px">0</div>
<div class="" style="left:1507px;top:545.5px;width:72px;height:1px;background:#8a8a8a"></div>
<div class="lbl" style="left:1472.5px;top:541px">-5</div>
<div class="" style="left:1507px;top:609px;width:72px;height:1px;background:#8a8a8a"></div>
<div class="lbl" style="left:1472.5px;top:604.5px">-10</div>
<div class="" style="left:1507px;top:672.5px;width:72px;height:1px;background:#8a8a8a"></div>
<div class="lbl" style="left:1472.5px;top:668px">-20</div>
<div class="" style="left:1507px;top:736px;width:72px;height:2px;background:#8a8a8a"></div>
<div class="lbl" style="left:1472.5px;top:732px">-30</div>
<div class="" style="left:1507px;top:799.5px;width:72px;height:1px;background:#8a8a8a"></div>
<div class="lbl" style="left:1472.5px;top:795px">-50</div>
<div class="knob" style="left:1514px;top:804px;width:57px;height:119px;"></div>
<div class="nm" style="left:1478px;top:928px;width:122px">DCA 3</div>
<div class="" style="left:1636px;top:247px;width:65px;height:12px;background:#500000"></div>
<div class="" style="left:1636px;top:259px;width:65px;height:108px;background:#45330a"></div>
<div class="" style="left:1636px;top:367px;width:65px;height:236px;background:#003209"></div>
<div class="" style="left:1708px;top:247px;width:65px;height:12px;background:#500000"></div>
<div class="" style="left:1708px;top:259px;width:65px;height:108px;background:#45330a"></div>
<div class="" style="left:1708px;top:367px;width:65px;height:236px;background:#003209"></div>
<div class="c btn" style="left:1623px;top:603px;width:161px;height:57px;background:#500000;border-color:#a31414;font-size:12px;color:#f0f0f0">L R</div>
<div class="c btn" style="left:1623px;top:658.5px;width:161px;height:103.5px;background:#003209;border-color:#177a17;font-size:12px;color:#f0f0f0">DCA</div>
<div class="c btn" style="left:1621.5px;top:768.5px;width:164px;height:173.5px;background:#00e2e2;border-color:#10c8c8;color:#1a3838;font-size:15px;line-height:22px">Decay<br>0.20 s</div>
<div class="strip" style="left:1790px;top:157px;width:127px;height:785px;"></div>
<div class="c wb" style="left:1790px;top:157px;width:127px;height:103px;">LR</div>
<div class="c btn" style="left:1790px;top:261px;width:127px;height:44px;background:#500000;border-color:#a31414;font-size:16px;color:#f0f0f0">MUTE</div>
<svg style="position:absolute;left:1835.5px;top:310px" width="24" height="9" viewBox="0 0 24 9"><rect x="0.8" y="4.6" width="4.3" height="1.5" fill="#eeeeee"/><ellipse cx="10.4" cy="4.0" rx="3.35" ry="2.95" fill="none" stroke="#eeeeee" stroke-width="1.05"/><ellipse cx="17.7" cy="4.0" rx="3.35" ry="2.95" fill="none" stroke="#eeeeee" stroke-width="1.05"/></svg>
<div class="" style="left:1901px;top:306px;width:10px;height:12px;background:#500000"></div>
<div class="" style="left:1901px;top:318px;width:10px;height:178px;background:#45330a"></div>
<div class="" style="left:1901px;top:496px;width:10px;height:390px;background:#003209"></div>
<div class="" style="left:1912px;top:485px;width:4px;height:123px;background:#ff2626"></div>
<div class="" style="left:1844px;top:379px;width:11px;height:382px;background:#000"></div>
<div class="" style="left:1817px;top:377.5px;width:65px;height:1px;background:#8a8a8a"></div>
<div class="lbl" style="left:1784.5px;top:373px">10</div>
<div class="" style="left:1817px;top:432.5px;width:65px;height:1px;background:#8a8a8a"></div>
<div class="lbl" style="left:1784.5px;top:428px">5</div>
<div class="" style="left:1817px;top:487.3px;width:65px;height:1.4px;background:#f2f2f2"></div>
<div class="lbl" style="left:1784.5px;top:483px">0</div>
<div class="" style="left:1817px;top:542.5px;width:65px;height:1px;background:#8a8a8a"></div>
<div class="lbl" style="left:1784.5px;top:538px">-5</div>
<div class="" style="left:1817px;top:596.5px;width:65px;height:1px;background:#8a8a8a"></div>
<div class="lbl" style="left:1784.5px;top:592px">-10</div>
<div class="" style="left:1817px;top:651.5px;width:65px;height:1px;background:#8a8a8a"></div>
<div class="lbl" style="left:1784.5px;top:647px">-20</div>
<div class="" style="left:1817px;top:706px;width:65px;height:2px;background:#8a8a8a"></div>
<div class="lbl" style="left:1784.5px;top:702px">-30</div>
<div class="" style="left:1817px;top:760.5px;width:65px;height:1px;background:#8a8a8a"></div>
<div class="lbl" style="left:1784.5px;top:756px">-50</div>
<div class="knob" style="left:1823px;top:761px;width:52px;height:109px;"></div>
<div class="nm" style="left:1806px;top:873px;width:80px">LR</div>
<div class="c btn" style="left:1790px;top:888px;width:127px;height:53px;background:#45330a;border-color:#8c6b17;font-size:16px;color:#f0f0f0">SOLO</div>
</body></html>
